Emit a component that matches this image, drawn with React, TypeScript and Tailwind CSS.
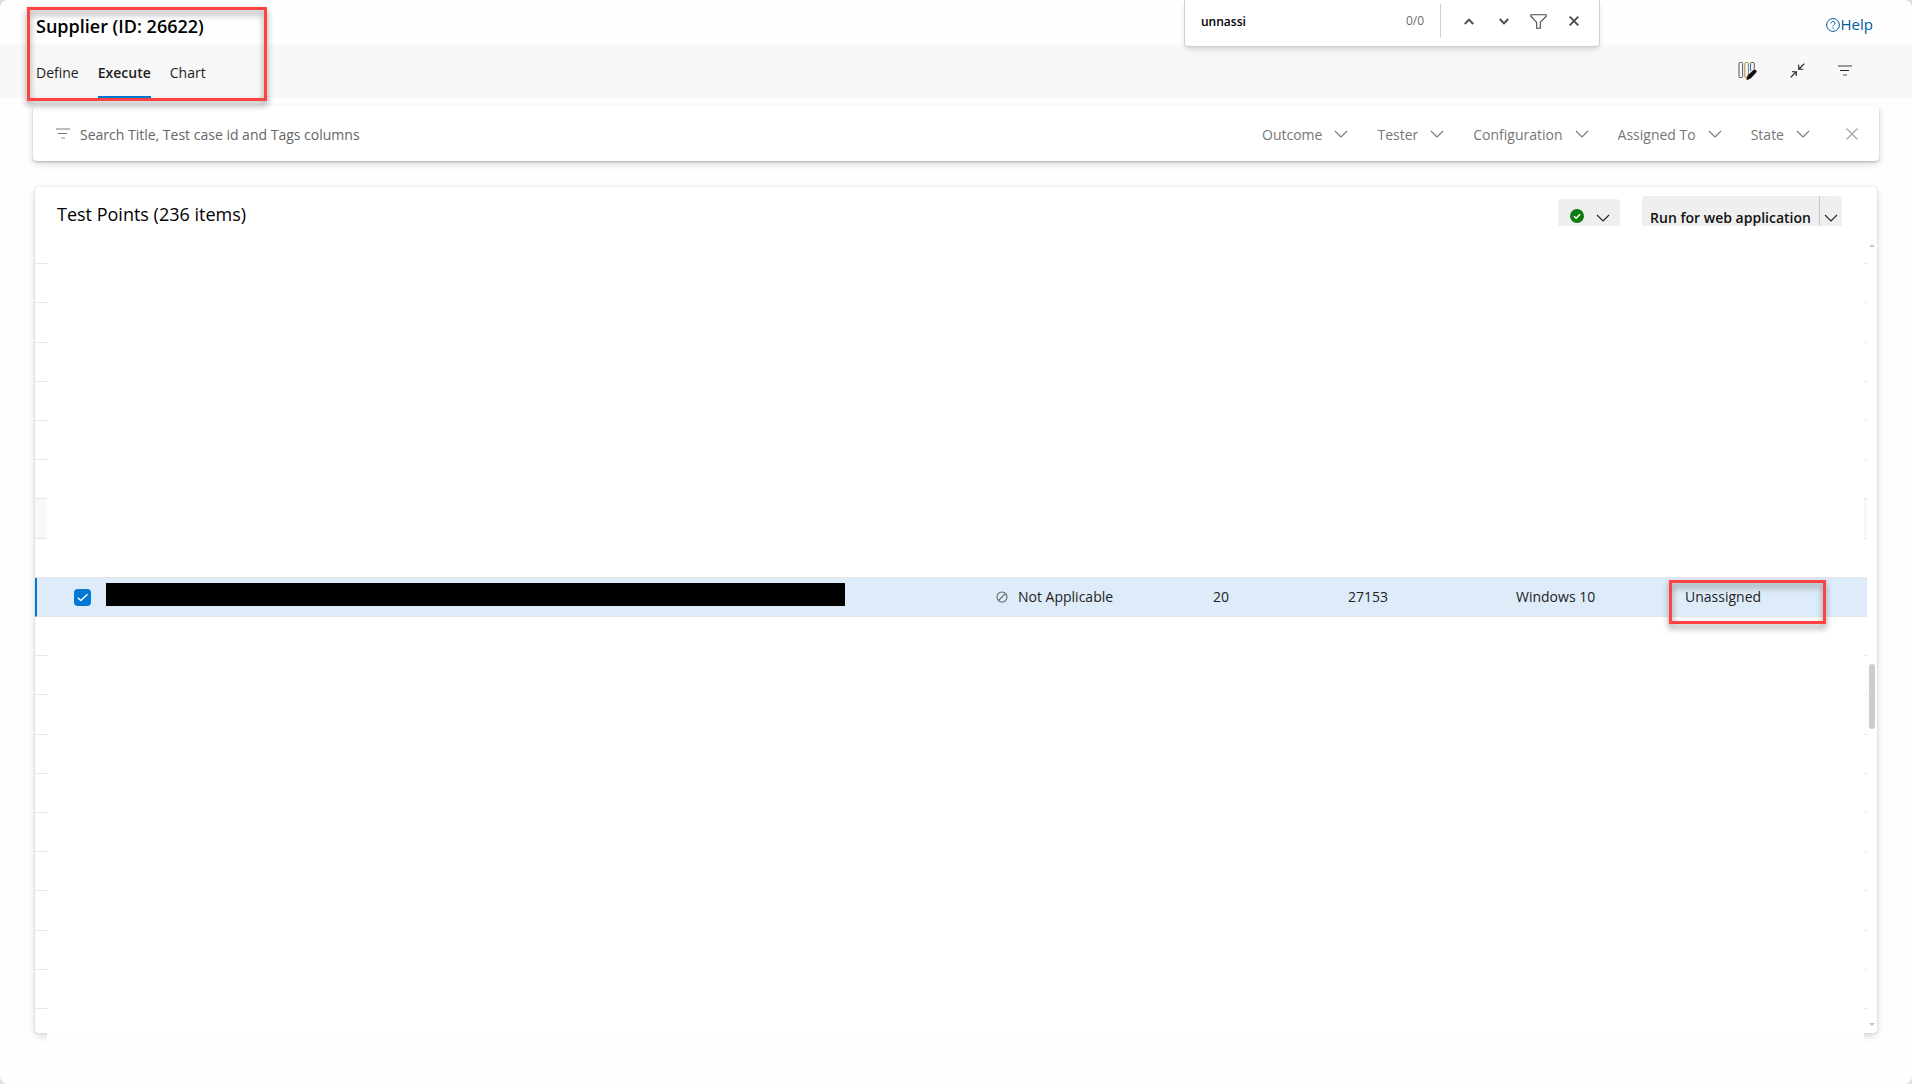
import { ReactNode } from 'react';

const filters = ['Outcome', 'Tester', 'Configuration', 'Assigned To', 'State'];
const tabs = ['Define', 'Execute', 'Chart'];

const ROW_COUNT = 20;
const HOVERED_ROW = 7;
const SELECTED_ROW = 9;

function Chevron({ className = '' }: { className?: string }) {
  return (
    <svg className={className} width="14" height="8" viewBox="0 0 14 8" fill="none" stroke="currentColor" strokeWidth="1.1" aria-hidden="true">
      <path d="M1 1l6 6 6-6" />
    </svg>
  );
}

function FilterLines({ strong = false }: { strong?: boolean }) {
  return (
    <svg width="14" height="12" viewBox="0 0 14 12" shapeRendering="crispEdges" aria-hidden="true">
      <rect x="0" y="0" width="14" height="2" fill={strong ? '#9a9a9a' : '#bdbdbd'} />
      <rect x="2" y="5" width="9" height="1" fill={strong ? '#222222' : '#777777'} />
      <rect x="5" y="9" width="4" height="2" fill={strong ? '#a6a6a6' : '#c8c8c8'} />
    </svg>
  );
}

function FindButton({ label, children }: { label: string; children: ReactNode }) {
  return (
    <button aria-label={label} className="flex h-[34px] w-[35px] items-center justify-center text-[#4a4a4a]">
      {children}
    </button>
  );
}

function FindBar() {
  return (
    <div className="absolute top-0 right-[312px] z-20 flex h-[47px] w-[416px] items-start rounded-b border border-t-0 border-[#d0d0d0] bg-white pt-1 pr-2 pl-4 shadow-md">
      <input
        aria-label="Find on page"
        defaultValue="unnassi"
        className="h-[34px] min-w-0 flex-1 bg-transparent text-xs font-semibold text-black outline-none"
      />
      <span className="flex h-[34px] items-center pr-4 text-xs text-[#6b6b6b]">0/0</span>
      <div className="mr-[10px] h-[34px] w-px bg-[#d0d0d0]" />
      <FindButton label="Previous">
        <svg width="10" height="7" viewBox="0 0 10 7" fill="none" stroke="currentColor" strokeWidth="1.9">
          <path d="M.8 6L5 1.7 9.2 6" />
        </svg>
      </FindButton>
      <FindButton label="Next">
        <svg width="10" height="7" viewBox="0 0 10 7" fill="none" stroke="currentColor" strokeWidth="1.9">
          <path d="M.8 1L5 5.3 9.2 1" />
        </svg>
      </FindButton>
      <FindButton label="Filter">
        <svg width="17" height="15" viewBox="0 0 17 15" fill="none" stroke="currentColor" strokeWidth="1.1">
          <path d="M.8.8h15.4v1.4L10.3 8.4v5.8H6.7V8.4L.8 2.2z" />
        </svg>
      </FindButton>
      <FindButton label="Close">
        <svg width="10" height="10" viewBox="0 0 10 10" fill="none" stroke="currentColor" strokeWidth="1.9">
          <path d="M.7.7l8.6 8.6M9.3.7L.7 9.3" />
        </svg>
      </FindButton>
    </div>
  );
}

function Header() {
  return (
    <header>
      <div className="flex h-[45px] items-center justify-between pt-1.5 pr-[39px] pl-9">
        <h1 className="text-lg font-semibold text-black">Supplier (ID: 26622)</h1>
        <a href="#help" className="flex items-center gap-px pb-0.5 text-[15px] text-[#005a9e]">
          <svg width="14" height="14" viewBox="0 0 14 14" fill="none" stroke="currentColor" aria-hidden="true">
            <circle cx="7" cy="7" r="6.4" />
            <path d="M5.1 5.4c0-1.2.8-1.9 1.9-1.9s1.9.7 1.9 1.7c0 1.4-1.9 1.5-1.9 3.1M7 9.4v1.2" />
          </svg>
          Help
        </a>
      </div>
      <div className="flex h-[53px] items-stretch justify-between bg-[#f8f8f8] pr-[60px] pl-9">
        <div role="tablist" className="flex gap-[19px]">
          {tabs.map((tab) => (
            <button
              key={tab}
              role="tab"
              aria-selected={tab === 'Execute'}
              className={
                tab === 'Execute'
                  ? 'border-b-2 border-[#0078d4] pt-1 text-sm font-semibold text-[#222222]'
                  : 'border-b-2 border-transparent pt-1 text-sm text-[#222222]'
              }
            >
              {tab}
            </button>
          ))}
        </div>
        <div className="flex items-center gap-[33px] pb-0.5">
          <button aria-label="Column options">
            <svg width="19" height="19" viewBox="0 0 19 19" fill="none">
              <rect x="1" y="1.5" width="3.6" height="15" rx="1" stroke="#555555" />
              <rect x="6.8" y="1.5" width="3.6" height="15" rx="1" stroke="#b8862d" />
              <path d="M12.6 10V2.5a1 1 0 011-1h1.6a1 1 0 011 1V8" stroke="#555555" />
              <path d="M10.5 2.5v10" stroke="#3a96dd" />
              <path d="M9.4 18l.8-3.2 6-5.4c.8-.7 2.2.8 1.500 1.700l-5.500 5.700z" fill="#111111" stroke="#111111" strokeWidth="1.5" />
            </svg>
          </button>
          <button aria-label="Exit full screen">
            <svg width="15" height="15" viewBox="0 0 15 15" fill="none" stroke="#222222" strokeWidth="1.1">
              <path d="M14.3.7L9 6M8.7 1.800V6.200h4.400M.7 14.300L6 9M1.900 8.700h4.400v4.400" />
            </svg>
          </button>
          <button aria-label="Toggle filter bar">
            <FilterLines strong />
          </button>
        </div>
      </div>
    </header>
  );
}

function FilterBar() {
  return (
    <div className="mx-[33px] mt-2 flex h-[55px] items-center rounded bg-white pr-[21px] pl-[23px] shadow-[0_3px_7px_rgba(0,0,0,0.16),0_1px_2px_rgba(0,0,0,0.2)]">
      <FilterLines />
      <input
        aria-label="Search test points"
        placeholder="Search Title, Test case id and Tags columns"
        className="ml-[10px] min-w-0 flex-1 bg-transparent pt-0.5 text-sm text-[#666666] outline-none placeholder:text-[#666666]"
      />
      <div className="flex items-center gap-[29px]">
        {filters.map((name) => (
          <label key={name} className="flex items-center gap-3 text-[#767676]">
            <select aria-label={name} className="field-sizing-content appearance-none bg-transparent pt-0.5 text-sm">
              <option>{name}</option>
            </select>
            <Chevron />
          </label>
        ))}
      </div>
      <button aria-label="Clear filters" className="ml-9 text-[#a0a0a0]">
        <svg width="12" height="12" viewBox="0 0 12 12" fill="none" stroke="currentColor" strokeWidth="1.1">
          <path d="M.5.5l11 11M11.5.5l-11 11" />
        </svg>
      </button>
    </div>
  );
}

function CardHeader() {
  return (
    <div className="flex h-[39px] items-start justify-between overflow-hidden pr-[35px] pl-[22px]">
      <h2 className="pt-3 text-lg leading-[30px] text-black">Test Points (236 items)</h2>
      <div className="flex gap-[22px] pt-[9px]">
        <button aria-label="Set outcome" className="mt-[3px] flex h-9 w-[62px] items-center justify-between rounded-sm bg-[#efefef] px-3 pb-0.5 text-[#222222]">
          <svg width="14" height="14" viewBox="0 0 14 14" fill="none">
            <circle cx="7" cy="7" r="7" fill="#107c10" />
            <path d="M4 7.2l2.2 2.1L10 5.2" stroke="#ffffff" strokeWidth="1.5" />
          </svg>
          <Chevron className="mt-1 -mr-0.5" />
        </button>
        <div className="flex h-11 rounded-sm bg-[#efefef]">
          <button className="w-[177px] text-sm font-semibold text-[#111111]">Run for web application</button>
          <button aria-label="More run options" className="flex w-[23px] items-center justify-center border-l border-[#c8c8c8] text-[#222222]">
            <Chevron />
          </button>
        </div>
      </div>
    </div>
  );
}

function SelectedRow() {
  return (
    <tr className="h-[39px] bg-[#deecf9] text-sm text-[#222222]">
      <td className="border-b border-l-2 border-b-[#e6e6e6] border-l-[#0078d4]" />
      <td className="border-b border-[#e6e6e6] pl-[27px]">
        <span className="grid w-[17px]">
          <input
            type="checkbox"
            aria-label="Select test point"
            defaultChecked
            className="size-[17px] appearance-none rounded bg-[#0078d4] [grid-area:1/1]"
          />
          <svg className="pointer-events-none [grid-area:1/1]" width="17" height="17" viewBox="0 0 17 17" fill="none" stroke="#ffffff" strokeWidth="1.4" aria-hidden="true">
            <path d="M3.8 8.8l3 2.8 6.7-6.3" />
          </svg>
        </span>
      </td>
      <td className="border-b border-[#e6e6e6] pb-1.5">
        <div className="h-[23px] w-[83%] bg-black" />
      </td>
      <td className="border-b border-[#e6e6e6]">
        <span className="flex items-center gap-[10px]">
          <svg width="12" height="12" viewBox="0 0 12 12" fill="none" stroke="#666666" strokeWidth="1.1" aria-hidden="true">
            <circle cx="6" cy="6" r="5" />
            <path d="M2.5 9.5l7-7" />
          </svg>
          Not Applicable
        </span>
      </td>
      <td className="border-b border-[#e6e6e6]">20</td>
      <td className="border-b border-[#e6e6e6]">27153</td>
      <td className="border-b border-[#e6e6e6]">Windows 10</td>
      <td className="relative border-b border-[#e6e6e6]">
        Unassigned
        <div className="pointer-events-none absolute top-[2px] -left-4 h-[44px] w-[157px] border-3 border-[#ff4343] drop-shadow-[0_4px_3px_rgba(0,0,0,0.45)]" />
      </td>
      <td className="border-b border-[#e6e6e6]" />
    </tr>
  );
}

function EmptyRow({ index }: { index: number }) {
  const height = index === 0 ? 'h-[38px]' : index % 5 === 2 ? 'h-10' : 'h-[39px]';
  const fill = index === HOVERED_ROW ? 'bg-[#f8f8f8]' : '';
  // the row above the selection keeps its full-width divider
  const middle = index === SELECTED_ROW - 1 ? 'border-b border-[#e6e6e6]' : '';
  return (
    <tr className={height}>
      <td className={`border-b border-[#e6e6e6] ${fill}`} />
      <td className={middle} colSpan={7} />
      <td className={`border-b border-[#e6e6e6] ${fill}`} />
    </tr>
  );
}

function TestPoints() {
  return (
    <section className="relative mx-[35px] mt-[26px] mb-[51px] flex flex-1 flex-col rounded bg-white shadow-[0_3px_7px_rgba(0,0,0,0.16),0_0_2px_rgba(0,0,0,0.14)]">
      <CardHeader />
      <div className="flex flex-1 items-stretch">
        <div className="min-w-0 flex-1">
          <table className="w-full table-fixed border-separate border-spacing-0">
            <colgroup>
              <col className="w-3" />
              <col className="w-[59px]" />
              <col />
              <col className="w-[217px]" />
              <col className="w-[135px]" />
              <col className="w-[168px]" />
              <col className="w-[169px]" />
              <col className="w-[179px]" />
              <col className="w-[3px]" />
            </colgroup>
            <tbody>
              {Array.from({ length: ROW_COUNT }, (_, i) =>
                i === SELECTED_ROW ? <SelectedRow key={i} /> : <EmptyRow key={i} index={i} />
              )}
            </tbody>
          </table>
        </div>
        <div className="flex w-[10px] flex-col items-center pt-[18px] pb-[7px]" aria-hidden="true">
          <svg width="6" height="3" viewBox="0 0 6 3" fill="#c4c4c4">
            <path d="M0 3l3-3 3 3z" />
          </svg>
          <div className="grow-[416]" />
          <div className="h-[65px] w-1.5 rounded-full bg-[#cccccc]" />
          <div className="grow-[294]" />
          <svg width="6" height="3" viewBox="0 0 6 3" fill="#c4c4c4">
            <path d="M0 0l3 3 3-3z" />
          </svg>
        </div>
      </div>
      <div className="absolute top-full right-[13px] left-3 h-2 bg-[#fefefe]" />
    </section>
  );
}

export default function App() {
  return (
    <div className="min-h-screen bg-[#e8dada] font-['Open_Sans','Noto_Sans',sans-serif]">
      <main className="relative flex min-h-screen flex-col rounded-lg bg-[#fefefe]">
        <FindBar />
        <Header />
        <FilterBar />
        <TestPoints />
        <div className="pointer-events-none absolute top-[7px] left-[27px] z-10 h-[94px] w-[240px] border-3 border-[#ff4343] drop-shadow-[0_4px_3px_rgba(0,0,0,0.45)]" />
      </main>
    </div>
  );
}
